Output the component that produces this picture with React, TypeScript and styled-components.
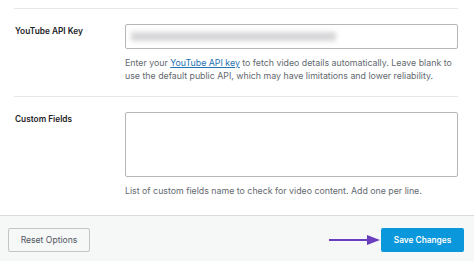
import styled, { createGlobalStyle } from "styled-components";

const GlobalStyle = createGlobalStyle`
    body {
        margin: 0;
        background: #fff;
        font-family: Inter, "Liberation Sans", sans-serif;
        color: #1d2327;
    }
`

const Arrow = () => (
    <svg width="52" height="12" viewBox="0 0 52 12">
        <line x1="0" y1="6" x2="42" y2="6" stroke="#6a3fbf" strokeWidth="2.2" />
        <polygon points="38,1 51,6 38,11" fill="#6a3fbf" />
    </svg>
)

const App = () => {

    return(
        <Page>
            <GlobalStyle />
            <Form>
                <Row>
                    <Label>YouTube API Key</Label>
                    <Field>
                        <Input>
                            <Blur />
                        </Input>
                        <Help>
                            Enter your <HelpLink>YouTube API key</HelpLink> to fetch video details automatically. Leave blank to use the default public API, which may have limitations and lower reliability.
                        </Help>
                    </Field>
                </Row>
                <Row last>
                    <Label>Custom Fields</Label>
                    <Field>
                        <TextArea />
                        <Help>List of custom fields name to check for video content. Add one per line.</Help>
                    </Field>
                </Row>
            </Form>
            <Footer>
                <ResetButton>Reset Options</ResetButton>
                <SaveGroup>
                    <Arrow />
                    <SaveButton>Save Changes</SaveButton>
                </SaveGroup>
            </Footer>
        </Page>
    )
}

export default App;

const Page = styled.div`
    width: 474px;
    height: 261px;
    overflow: hidden;
    display: flex;
    flex-direction: column;
`

    const Form = styled.div`
        padding: 8px 16px 0 14px;
    `

        const Row = styled.div<{ last?: boolean }>`
            display: grid;
            grid-template-columns: 111px 1fr;
            border-top: 1px solid #e6e7e8;
            padding: 15px 0 ${p => p.last ? "18px" : "14px"};
        `

            const Label = styled.div`
                font-size: 8.3px;
                font-weight: 600;
                padding: 2px 0 0 1px;
                color: #1d2327;
            `

            const Field = styled.div`
                display: flex;
                flex-direction: column;
            `

                const Input = styled.div`
                    height: 25px;
                    box-sizing: border-box;
                    border: 1px solid #b4b6ba;
                    border-radius: 2px;
                    background: #fff;
                    display: flex;
                    align-items: center;
                    padding-left: 5px;
                `

                    const Blur = styled.span`
                        width: 205px;
                        height: 9px;
                        background: #d6d6d8;
                        filter: blur(2.5px);
                    `

                const TextArea = styled.div`
                    height: 65px;
                    box-sizing: border-box;
                    border: 1px solid #b4b6ba;
                    border-radius: 2px;
                    background: #fff;
                `

                const Help = styled.p`
                    margin: 7px 0 0;
                    font-size: 8.8px;
                    line-height: 13px;
                    color: #646970;
                `

                    const HelpLink = styled.a`
                        color: #2271b1;
                        text-decoration: underline;
                    `

    const Footer = styled.div`
        flex: 1;
        border-top: 1px solid #dcdcde;
        background: #f6f7f7;
        display: flex;
        justify-content: space-between;
        align-items: flex-start;
        padding: 12px 10px 0 8px;
    `

        const ResetButton = styled.button`
            width: 82px;
            height: 24px;
            border: 1px solid #c3c4c7;
            border-radius: 2px;
            background: #f6f7f7;
            color: #50575e;
            font-family: inherit;
            font-size: 8.6px;
            padding: 0;
        `

        const SaveGroup = styled.div`
            display: flex;
            align-items: center;
        `

            const SaveButton = styled.button`
                width: 83px;
                height: 24px;
                border: 0;
                border-radius: 2px;
                background: #0b97dc;
                color: #fff;
                font-family: inherit;
                font-weight: 600;
                font-size: 8.3px;
                padding: 0;
            `
